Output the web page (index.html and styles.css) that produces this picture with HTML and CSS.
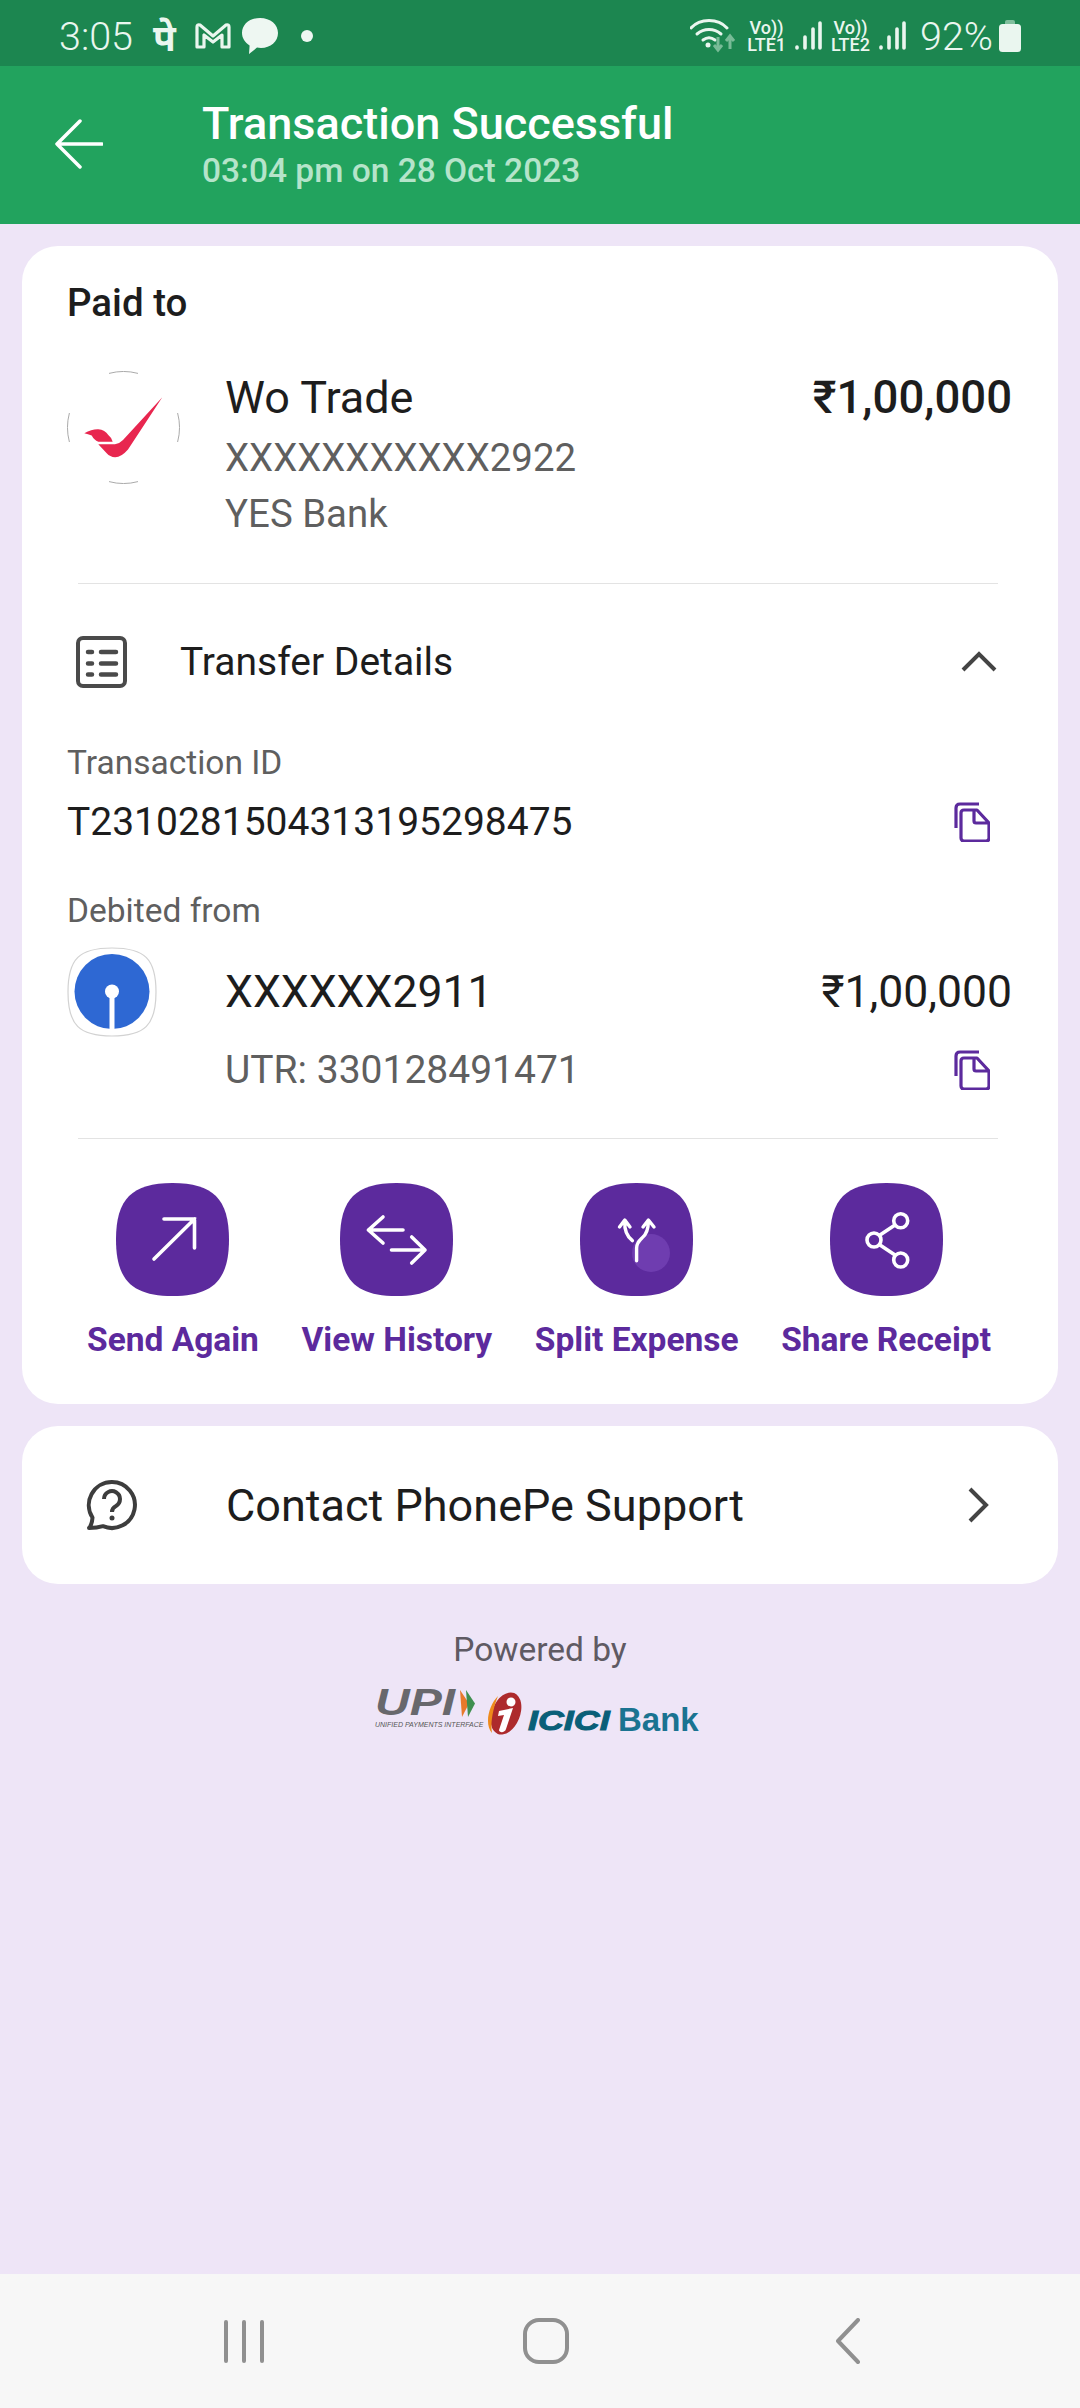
FILE: index.html
```html
<!DOCTYPE html>
<html lang="en">
<head>
<meta charset="utf-8">
<title>Transaction Successful</title>
<link rel="stylesheet" href="styles.css">
</head>
<body>
<div class="status">
  <div class="status-left">
    <span class="time">3:05</span>
    <span class="pe">पे</span>
    <svg class="s-m" width="36" height="28" viewBox="0 0 36 28"><path d="M2 25V5q0-3 3-2l13 11L31 3q3-1 3 2v20H27V13l-9 7-9-7v12z" fill="none" stroke="#eaf6ef" stroke-width="3.200" stroke-linejoin="round"/></svg>
    <svg class="s-b" width="38" height="38" viewBox="0 0 38 38"><path d="M19 1c10.500 0 18 6.500 18 15s-7.500 15-17 15c-1.500 0-3-.1-4-.4L8 37l.6-8.500C4 25.500 1 21 1 16 1 7.500 8.500 1 19 1z" fill="#eef7f2"/></svg>
    <span class="s-dot"></span>
  </div>
  <div class="status-right">
    <svg class="s-wifi" width="46" height="34" viewBox="0 0 46 34"><g fill="none" stroke="#eaf6ef" stroke-width="3" stroke-linecap="round"><path d="M1 9C10-1 28-1 37 9"/><path d="M7 15c7-6 17-6 24 0"/><path d="M13 21c4-3 8-3 12 0"/></g><circle cx="18" cy="26" r="2.500" fill="#eaf6ef"/><g fill="none" stroke="#78bb97" stroke-width="3"><path d="M28 18v12M24 26l4 5 4-5"/><path d="M40 30V18M36 22l4-5 4 5"/></g></svg>
    <span class="lte"><span>Vo))</span><span>LTE1</span></span>
    <svg width="27" height="30" viewBox="0 0 27 30"><g stroke="#eaf6ef" stroke-width="3.600" stroke-linecap="round"><path d="M2 26v1M10 16v11M18 8v19M25 2v25"/></g></svg>
    <span class="lte"><span>Vo))</span><span>LTE2</span></span>
    <svg width="27" height="30" viewBox="0 0 27 30"><g stroke="#eaf6ef" stroke-width="3.600" stroke-linecap="round"><path d="M2 26v1M10 16v11M18 8v19M25 2v25"/></g></svg>
    <span class="batt-text">92%</span>
    <svg width="22" height="32" viewBox="0 0 22 32"><rect x="6" y="0" width="10" height="6" rx="2" fill="#7fbf9c"/><rect x="0" y="4" width="22" height="28" rx="3.500" fill="#eaf6ef"/></svg>
  </div>
</div>
<header class="topbar">
  <svg class="back" width="48" height="50" viewBox="0 0 48 50"><path d="M25 2L2 25l23 23M2 25h45" fill="none" stroke="#fff" stroke-width="3.500" stroke-linecap="round" stroke-linejoin="round"/></svg>
  <div class="titles">
    <div class="title">Transaction Successful</div>
    <div class="subtitle">03:04 pm on 28 Oct 2023</div>
  </div>
</header>
<main class="content">
  <section class="card main-card">
    <div class="paid">Paid to</div>
    <div class="payee">
      <svg class="avatar" width="113" height="113" viewBox="0 0 113 113">
        <g fill="none" stroke="#aaa" stroke-width="1"><path d="M42 2.400a56 56 0 0 1 29 0"/><path d="M42 110.600a56 56 0 0 0 29 0"/><path d="M2.400 42a56 56 0 0 0 0 29"/><path d="M110.600 42a56 56 0 0 1 0 29"/></g>
        <path d="M95.300 26.300L61 78.500Q54 86.500 48 86.300Q43 86 39.700 82.300L31.300 73.300L48 73.300Q52 73 56 69z" fill="#e8264f"/>
        <path d="M17.300 62.300Q25 58 31.300 58.300Q38 59 41.300 64Q45 67 45.700 70.700L31.300 70.700Q27 69 24.700 64.500Q21 63 17.300 62.300z" fill="#e8264f"/>
      </svg>
      <div class="payee-text">
        <div class="name">Wo Trade</div>
        <div class="sub sub-a">XXXXXXXXXXX2922</div>
        <div class="sub sub-b">YES Bank</div>
      </div>
      <div class="amount">₹1,00,000</div>
    </div>
    <div class="rule rule-a"></div>
    <div class="transfer">
      <svg class="list" width="54" height="54" viewBox="0 0 54 54"><rect x="4" y="3" width="47" height="48" rx="5" fill="none" stroke="#4a4a4a" stroke-width="4"/><g stroke="#4a4a4a" stroke-width="4.500" stroke-linecap="round"><path d="M14 17h4M27 17h15M14 28.500h4M27 28.500h15M14 39.500h4M27 39.500h15"/></g></svg>
      <span class="transfer-label">Transfer Details</span>
      <svg class="chev" width="36" height="22" viewBox="0 0 36 22"><path d="M2 19L18 3l16 16" fill="none" stroke="#444" stroke-width="4"/></svg>
    </div>
    <div class="label label-a">Transaction ID</div>
    <div class="line-row">
      <span class="txn">T2310281504313195298475</span>
      <svg class="copy" width="36" height="40" viewBox="0 0 36 40"><path d="M25 2H6Q2 2 2 6v20M7 11q0-3 3-3h13l12 13v15q0 3-3 3H10q-3 0-3-3zM20 8v11q0 2 2 2h13" fill="none" stroke="#5c2a9d" stroke-width="3.200" stroke-linejoin="round"/></svg>
    </div>
    <div class="label label-b">Debited from</div>
    <div class="debit">
      <svg class="sbi" width="90" height="90" viewBox="0 0 90 90"><path d="M45 1C78 1 89 12 89 45S78 89 45 89 1 78 1 45 12 1 45 1z" fill="#fff" stroke="#d2d2d2" stroke-width="1.200"/><circle cx="45" cy="44.500" r="37.500" fill="#2e68d3"/><circle cx="45" cy="44.500" r="7" fill="#fff"/><path d="M45 45v37" stroke="#fff" stroke-width="5"/></svg>
      <div class="debit-body">
        <div class="debit-top"><span class="acct">XXXXXX2911</span><span class="debit-amt">₹1,00,000</span></div>
        <div class="debit-bottom"><span class="sub utr">UTR: 330128491471</span>
          <svg class="copy" width="36" height="40" viewBox="0 0 36 40"><path d="M25 2H6Q2 2 2 6v20M7 11q0-3 3-3h13l12 13v15q0 3-3 3H10q-3 0-3-3zM20 8v11q0 2 2 2h13" fill="none" stroke="#5c2a9d" stroke-width="3.200" stroke-linejoin="round"/></svg>
        </div>
      </div>
    </div>
    <div class="rule rule-b"></div>
    <div class="actions">
      <div class="action">
        <svg class="btn" width="113" height="113" viewBox="0 0 113 113"><path class="squircle" d="M56.500 0C97 0 113 16 113 56.500S97 113 56.500 113 0 97 0 56.500 16 0 56.500 0z"/><path d="M48 36h30.500v29M78.500 36L38 76" fill="none" stroke="#fff" stroke-width="3.600" stroke-linecap="round"/></svg>
        <span>Send Again</span>
      </div>
      <div class="action">
        <svg class="btn" width="113" height="113" viewBox="0 0 113 113"><path class="squircle" d="M56.500 0C97 0 113 16 113 56.500S97 113 56.500 113 0 97 0 56.500 16 0 56.500 0z"/><path d="M43 34L28.400 47 43 60M28.400 47H63M51.500 67H85M71.700 54L85 67 71.700 80" fill="none" stroke="#fff" stroke-width="3.600" stroke-linecap="round" stroke-linejoin="round"/></svg>
        <span>View History</span>
      </div>
      <div class="action">
        <svg class="btn" width="113" height="113" viewBox="0 0 113 113"><path class="squircle" d="M56.500 0C97 0 113 16 113 56.500S97 113 56.500 113 0 97 0 56.500 16 0 56.500 0z"/><circle cx="71" cy="70" r="19" fill="#6f3db0"/><path d="M56.600 77.700V65Q56.600 60 62 55 68.400 50 68.400 38M63 44l5.400-7 5.600 7M44.800 38Q44 51 52.400 57.700M39.500 44l5.300-7 5.200 7" fill="none" stroke="#fff" stroke-width="3.400" stroke-linecap="round" stroke-linejoin="round"/></svg>
        <span>Split Expense</span>
      </div>
      <div class="action">
        <svg class="btn" width="113" height="113" viewBox="0 0 113 113"><path class="squircle" d="M56.500 0C97 0 113 16 113 56.500S97 113 56.500 113 0 97 0 56.500 16 0 56.500 0z"/><path d="M50 52L65 42M50 62L65 72" stroke="#fff" stroke-width="3.600"/><g fill="#5c2a9d" stroke="#fff" stroke-width="3.600"><circle cx="70.700" cy="37.700" r="7"/><circle cx="44" cy="57" r="7"/><circle cx="70.700" cy="77" r="7"/></g></svg>
        <span>Share Receipt</span>
      </div>
    </div>
  </section>
  <section class="card support">
    <svg class="help" width="54" height="54" viewBox="0 0 54 54"><path d="M27 4a23 23 0 1 1-9 44.200Q12 50 4 50q3-3 3.500-10.500A23 23 0 0 1 27 4z" fill="none" stroke="#3d3d3d" stroke-width="4" stroke-linejoin="round"/><path d="M19 21a8 8 0 1 1 12 7q-4 2-4 6" fill="none" stroke="#3d3d3d" stroke-width="4"/><circle cx="27" cy="40" r="2.500" fill="#3d3d3d"/></svg>
    <span class="support-label">Contact PhonePe Support</span>
    <svg class="support-chev" width="22" height="36" viewBox="0 0 22 36"><path d="M3 2l16 16L3 34" fill="none" stroke="#444" stroke-width="4"/></svg>
  </section>
  <div class="powered">Powered by</div>
  <div class="logos">
    <div class="upi">
      <div class="upi-top"><span class="upi-word">UPI</span><svg width="15" height="27" viewBox="0 0 15 27"><path d="M0 0l9 13.500L2 27z" fill="#e8792b"/><path d="M6 0l9 13.500L8 27z" fill="#3f8f4f"/></svg></div>
      <div class="upi-sub">UNIFIED PAYMENTS INTERFACE</div>
    </div>
    <div class="icici">
      <svg width="40" height="43" viewBox="0 0 40 43"><ellipse cx="20" cy="21.500" rx="14" ry="22" transform="rotate(22 20 21.500)" fill="#ad2a2c"/><path d="M12 4C3 13-2 32 6 41 4 29 8 14 12 4z" fill="#ee8a1c"/><circle cx="25" cy="10" r="4.500" fill="#fff"/><path d="M13 19l14-3-7 21c-1 4-7 4-7 1l5-15-6 1z" fill="#fff"/></svg>
      <span class="icici-word">ICICI</span><span class="bank-word">Bank</span>
    </div>
  </div>
</main>
<nav class="navbar">
  <svg width="40" height="45" viewBox="0 0 40 45"><path d="M2 3v39M20 3v39M38 3v39" stroke="#909090" stroke-width="4" stroke-linecap="round"/></svg>
  <svg class="nav-home" width="46" height="46" viewBox="0 0 46 46"><rect x="2" y="2" width="42" height="42" rx="14" fill="none" stroke="#909090" stroke-width="4"/></svg>
  <svg width="24" height="46" viewBox="0 0 24 46"><path d="M22 2L2 23l20 21" fill="none" stroke="#909090" stroke-width="4" stroke-linecap="round" stroke-linejoin="round"/></svg>
</nav>
</body>
</html>
```
FILE: styles.css
```css
* { box-sizing: border-box; }
html, body { margin: 0; padding: 0; }
body {
  width: 1080px;
  height: 2408px;
  display: flex;
  flex-direction: column;
  background: #eee5f7;
  font-family: Roboto, "Noto Sans", sans-serif;
  color: #1d1d1d;
  overflow: hidden;
}
.status {
  height: 66px;
  background: #1c8650;
  display: flex;
  justify-content: space-between;
  align-items: center;
  padding: 6px 59px 0 59px;
  color: #eaf6ef;
  flex: none;
}
.status-left, .status-right { display: flex; align-items: center; }
.time { font-size: 39.5px; font-weight: 300; width: 94px; }
.pe { font-size: 37px; font-weight: 700; width: 42px; line-height: 1; font-family: "Noto Sans", Roboto, sans-serif; }
.s-m { margin-right: 10px; }
.s-dot { width: 12px; height: 12px; border-radius: 50%; background: #eef7f2; margin-left: 22px; }
.status-right svg { flex: none; }
.lte {
  display: flex;
  flex-direction: column;
  align-items: center;
  font-size: 18px;
  font-weight: 500;
  line-height: 17px;
  margin: 0 9px;
}
.s-wifi { margin-right: 2px; }
.batt-text { font-size: 39.5px; font-weight: 300; margin: 0 6px 0 14px; }
.topbar {
  height: 158px;
  background: #22a35e;
  display: flex;
  align-items: center;
  padding: 0 0 0 55px;
  flex: none;
}
.back { margin-right: 99px; margin-top: -2px; }
.title { font-size: 45px; font-weight: 500; color: #fff; line-height: 50px; }
.subtitle { font-size: 33.5px; color: #b5e4ca; line-height: 42px; font-weight: 500; margin-top: 1px; }
.content {
  flex: 1;
  padding: 22px 22px 0;
  display: flex;
  flex-direction: column;
}
.card { background: #fff; border-radius: 36px; }
.main-card { height: 1158px; padding: 37px 46px 0 45px; }
.paid { font-size: 38.5px; font-weight: 500; line-height: 40px; }
.payee { display: flex; margin-top: 48px; align-items: flex-start; }
.avatar { flex: none; margin-right: 45px; }
.payee-text { flex: 1; margin-top: -1px; }
.name { font-size: 45px; line-height: 56px; }
.sub { font-size: 38.4px; color: #5f5f5f; }
.sub-a { line-height: 50px; margin-top: 7px; }
.sub-b { line-height: 50px; margin-top: 6px; }
.utr { font-size: 39px; }
.amount { font-size: 45.5px; font-weight: 500; line-height: 56px; margin-top: -1px; }
.rule { height: 1px; background: #e3e3e3; margin: 0 14px 0 11px; }
.rule-a { margin-top: 44px; }
.transfer { display: flex; align-items: center; margin-top: 51px; height: 54px; padding-left: 7px; }
.list { margin-right: 52px; }
.transfer-label { flex: 1; font-size: 39px; }
.chev { margin-right: 15px; }
.label { font-size: 33.5px; color: #5f5f5f; line-height: 40px; }
.label-a { margin-top: 54px; }
.line-row { display: flex; justify-content: space-between; align-items: center; margin-top: 19px; height: 40px; }
.txn { font-size: 39px; }
.copy { margin-right: 22px; flex: none; }
.label-b { margin-top: 49px; }
.debit { display: flex; margin-top: 16px; align-items: flex-start; }
.sbi { flex: none; margin-right: 68px; }
.debit-body { flex: 1; }
.debit-top { display: flex; justify-content: space-between; align-items: center; height: 90px; font-size: 44.5px; }
.debit-bottom { display: flex; justify-content: space-between; align-items: center; margin-top: 13px; height: 40px; }
.rule-b { margin-top: 48px; }
.actions { display: flex; justify-content: space-between; margin-top: 44px; padding: 0 21px 0 20px; }
.action {
  display: flex;
  flex-direction: column;
  align-items: center;
  gap: 24px;
  font-size: 33.5px;
  font-weight: 700;
  color: #5c2a9d;
  line-height: 40px;
}
.squircle { fill: #5c2a9d; }
.support {
  height: 158px;
  margin-top: 22px;
  display: flex;
  align-items: center;
  padding: 0 69px 0 63px;
}
.help { margin-right: 87px; }
.support-label { flex: 1; font-size: 45px; }
.powered { font-size: 33.5px; color: #5f5a63; text-align: center; margin-top: 46px; line-height: 40px; }
.logos { display: flex; justify-content: flex-start; align-items: flex-end; margin-top: 15px; height: 50px; padding-left: 353px; }
.upi { width: 110px; margin-bottom: 5px; margin-right: 1px; }
.upi-top { display: flex; align-items: center; height: 28px; }
.upi-word { display: inline-block; width: 85px; font: italic 700 37px/28px "Liberation Sans", sans-serif; color: #68686c; transform: scaleX(1.3); transform-origin: left center; }
.upi-sub { font: italic 400 7px/10px "Liberation Sans", sans-serif; color: #555; white-space: nowrap; margin-top: 3px; }
.icici { display: flex; align-items: flex-end; }
.icici-word { display: inline-block; width: 90px; margin-left: 2px; font: italic 700 28px/28px "Liberation Sans", sans-serif; color: #0a5f78; -webkit-text-stroke: 1px #0a5f78; transform: scaleX(1.28); transform-origin: left center; }
.bank-word { font: 700 33px/30px "Liberation Sans", sans-serif; color: #1a7391; }
.navbar {
  height: 134px;
  flex: none;
  background: #f7f7f7;
  display: flex;
  align-items: center;
  justify-content: space-between;
  padding: 0 220px 0 224px;
}
.nav-home { margin-left: -8px; }
```
